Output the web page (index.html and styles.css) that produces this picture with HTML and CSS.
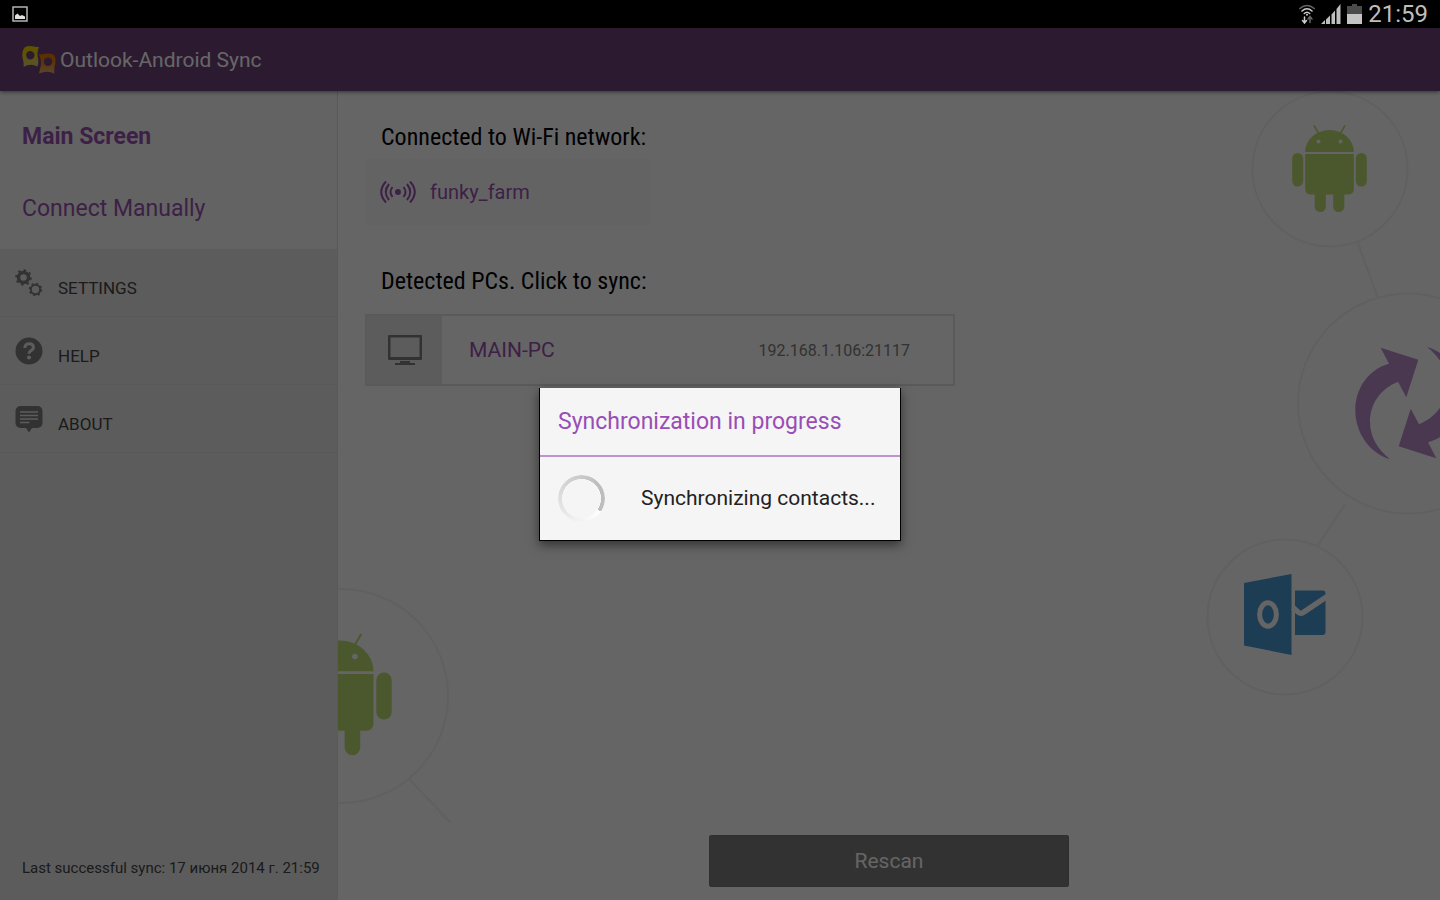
FILE: index.html
```html
<!DOCTYPE html>
<html lang="en">
<head>
  <meta charset="UTF-8">
  <meta name="viewport" content="width=device-width, initial-scale=1.0">
  <title>Outlook-Android Sync</title>
  <link rel="stylesheet" href="styles.css">
</head>
<body>
  <!-- shared robot shape -->
  <svg class="defs" width="0" height="0" aria-hidden="true">
    <symbol id="robot" viewBox="-38 -28 76 90" overflow="visible">
      <path d="M-24.3 0A24.3 22 0 0 1 24.3 0Z"/>
      <path d="M-15.2-26-10.5-18M15.2-26 10.5-18" stroke="#bcda70" stroke-width="1.5" stroke-linecap="round"/>
      <circle cx="-11" cy="-10.5" r="2" fill="#fcfcfc"/>
      <circle cx="11" cy="-10.5" r="2" fill="#fcfcfc"/>
      <path d="M-24.3 2H24.3V37.5A5 5 0 0 1 19.3 42.5H-19.3A5 5 0 0 1-24.3 37.5Z"/>
      <rect x="-37.3" y="1" width="11" height="33.5" rx="5.5"/>
      <rect x="26.3" y="1" width="11" height="33.5" rx="5.5"/>
      <path d="M-14.8 40H-3.7V54.5A5.5 5.5 0 0 1-14.8 54.5ZM3.7 40H14.8V54.5A5.5 5.5 0 0 1 3.7 54.5Z"/>
    </symbol>
  </svg>

  <div class="statusbar">
    <svg width="16" height="16" viewBox="0 0 16 16">
      <rect x="1" y="1" width="14" height="14" fill="none" stroke="#b4b4b4" stroke-width="1.5"/>
      <path d="M3 13V9.5L5.5 7.5 8 10 10 9 13 10.5V13Z" fill="#e0e0e0"/>
    </svg>
    <div class="status-right">
      <svg width="16" height="20" viewBox="0 0 16 20" fill="none" stroke-linecap="round">
        <path d="M.8 4.5Q8-1.5 15.2 4.5" stroke="#666" stroke-width="1.5"/>
        <path d="M3 7Q8 2.500 13 7M5.3 9.5Q8 7 10.7 9.5" stroke="#ccc" stroke-width="1.6"/>
        <circle cx="8" cy="10.8" r="1" fill="#ccc"/>
        <path d="M5.5 13V18M3.5 16.5 5.5 19 7.5 16.5" stroke="#ccc" stroke-width="1.5"/>
        <path d="M11 18.5V13.5M9 15 11 12.5 13 15" stroke="#666" stroke-width="1.5"/>
      </svg>
      <svg width="20" height="20" viewBox="0 0 20 20" fill="#bebebe">
        <path d="M0 20 4 16V20ZM5 20V15.5L9 11.5V20ZM10.5 20V10.5L14 6.500V20ZM15.5 20V5L19.5 0V20Z"/>
      </svg>
      <svg width="15" height="20" viewBox="0 0 15 20">
        <path d="M0 2H5V0H10V2H15V10H0Z" fill="#4b4b4b"/>
        <path d="M0 10H15V20H0Z" fill="#c4c4c4"/>
      </svg>
      <time class="clock">21:59</time>
    </div>
  </div>

  <div class="app">
    <header class="header">
      <svg class="logo" width="34" height="28" viewBox="0 0 34 28" aria-hidden="true">
        <defs>
          <linearGradient id="yel" x1="0" y1="0" x2="0" y2="1"><stop offset=".3" stop-color="#f0d000"/><stop offset="1" stop-color="#d8cb80"/></linearGradient>
          <linearGradient id="org" x1="0" y1="0" x2="0" y2="1"><stop offset=".3" stop-color="#e67a00"/><stop offset="1" stop-color="#e0ac78"/></linearGradient>
        </defs>
        <path fill="url(#yel)" fill-rule="evenodd" d="M2.5 1.5Q6-.5 10 .3Q14 1.3 17 1Q14.5 6 16 12Q17 17 15.500 20.500Q8 17 1.5 21Q2 18 1 14Q-1 6 2.5 1.5ZM8.3 5A4.2 4.2 0 1 0 8.3 13.4A4.2 4.2 0 1 0 8.3 5Z"/>
        <path fill="url(#org)" fill-rule="evenodd" d="M17 8.500Q21 8.500 25 7.500Q30 7 32.500 9.500Q34.500 14 32.500 21Q32 24 32.500 27.500Q25 24 17 27.500Q17.500 25 18.500 21Q20 14 17 8.500ZM26 11.5A4.2 4.2 0 1 0 26 19.9A4.2 4.2 0 1 0 26 11.5Z"/>
      </svg>
      <h1>Outlook-Android Sync</h1>
    </header>

    <div class="content">
      <nav class="sidebar">
        <div class="nav-main">
          <a class="active" href="#">Main Screen</a>
          <a href="#">Connect Manually</a>
        </div>
        <ul class="nav-menu">
          <li><a href="#">
            <svg width="28" height="28" viewBox="0 0 28 28" fill="none" stroke="#7d7d7d">
              <circle cx="8.5" cy="8.5" r="5" stroke-width="3.4"/>
              <circle cx="8.5" cy="8.5" r="7.3" stroke-width="2" stroke-dasharray="2.4 3.33"/>
              <circle cx="20.5" cy="20.5" r="4.7" stroke-width="2"/>
              <circle cx="20.5" cy="20.5" r="6" stroke-width="1.6" stroke-dasharray="2 2.71"/>
            </svg>
            <span>SETTINGS</span></a></li>
          <li><a href="#">
            <svg width="28" height="28" viewBox="0 0 28 28">
              <circle cx="14" cy="14" r="13.5" fill="#7d7d7d"/>
              <path d="M9.8 11Q10 6.7 14.2 6.7Q18.4 6.7 18.4 10.2Q18.4 12.3 16 13.6Q14 14.7 14 16.8" fill="none" stroke="#e6e6e6" stroke-width="3"/>
              <circle cx="14" cy="20.5" r="2.1" fill="#e6e6e6"/>
            </svg>
            <span>HELP</span></a></li>
          <li><a href="#">
            <svg width="28" height="28" viewBox="0 0 28 28">
              <path d="M5.5 1H22.5A5 5 0 0 1 27.5 6V18A5 5 0 0 1 22.5 23H17L14 27.5 11 23H5.5A5 5 0 0 1 .5 18V6A5 5 0 0 1 5.5 1Z" fill="#7d7d7d"/>
              <path d="M5 7H23M5 10.5H23M5 14H23M5 17.5H14.5" stroke="#e6e6e6" stroke-width="1.5"/>
            </svg>
            <span>ABOUT</span></a></li>
        </ul>
        <p class="last-sync">Last successful sync: 17 июня 2014 г. 21:59</p>
      </nav>

      <main class="main">
        <svg class="art art-right" width="240" height="620" viewBox="1200 91 240 620" aria-hidden="true">
          <g fill="none" stroke="#f0f0f0" stroke-width="2">
            <circle cx="1330" cy="169" r="77.5"/>
            <circle cx="1408" cy="403.5" r="110"/>
            <circle cx="1285" cy="617" r="77.5"/>
            <path d="M1357.5 242 1377.5 297M1345 504 1317.5 546"/>
          </g>
          <use href="#robot" x="1291.5" y="124" width="76" height="90" fill="#bcda70"/>
          <g fill="#b98bc9">
            <path id="arrow" d="M1380.7 347.7 1418.3 359.7 1406.3 397.3 1398 381.7C1380 389 1370 404 1370 422C1370 437 1378 450 1390 459C1371 454 1355.3 434 1355.3 410C1355.3 388 1369 369 1389 363.7Z"/>
            <use href="#arrow" transform="rotate(180 1408.5 403)"/>
          </g>
          <path d="M1244 583 1291.5 574V655L1244 645.5ZM1295 590.5H1322.5A3 3 0 0 1 1325.5 593.5V632A3 3 0 0 1 1322.5 635H1295Z" fill="#4898d2"/>
          <ellipse cx="1268" cy="614.5" rx="8.4" ry="11.7" fill="none" stroke="#fcfcfc" stroke-width="5"/>
          <path d="M1293 607.5 1298 612Q1301 614.5 1304 612L1327 596.5" fill="none" stroke="#fcfcfc" stroke-width="5.5"/>
        </svg>
        <svg class="art art-left" width="120" height="250" viewBox="338 580 120 250" aria-hidden="true">
          <g fill="none" stroke="#f0f0f0" stroke-width="2">
            <circle cx="341" cy="696" r="107"/>
            <path d="M409 779 451 823"/>
          </g>
          <use href="#robot" x="286" y="632" width="107" height="126" fill="#bcda70"/>
        </svg>

        <section class="block">
          <h2>Connected to Wi-Fi network:</h2>
          <div class="network">
            <svg width="36" height="24" viewBox="0 0 36 24" fill="none" stroke="#9a52b0" stroke-width="2">
              <circle cx="18" cy="12" r="3" fill="#9a52b0" stroke="none"/>
              <path d="M12.5 7Q8.5 12 12.5 17M9 4Q2.5 12 9 20M6 1.5Q-3.5 12 6 22.5M23.5 7Q27.5 12 23.5 17M27 4Q33.5 12 27 20M30 1.5Q39.5 12 30 22.5"/>
            </svg>
            <span>funky_farm</span>
          </div>
        </section>

        <section class="block">
          <h2>Detected PCs. Click to sync:</h2>
          <button class="pc" type="button">
            <span class="pc-icon">
              <svg width="34" height="32" viewBox="0 0 34 32" fill="#7d7d7d">
                <path fill-rule="evenodd" d="M1 1H33A1 1 0 0 1 34 2V25A1 1 0 0 1 33 26H1A1 1 0 0 1 0 25V2A1 1 0 0 1 1 1ZM2.5 3.5V23H31.5V3.5Z"/>
                <path d="M12 27H22V29H27V31H7V29H12Z"/>
              </svg>
            </span>
            <span class="pc-name">MAIN-PC</span>
            <span class="pc-ip">192.168.1.106:21117</span>
          </button>
        </section>

        <button class="rescan" type="button">Rescan</button>
      </main>
    </div>

    <div class="overlay">
      <div class="dialog" role="dialog" aria-labelledby="dialogTitle">
        <h2 id="dialogTitle">Synchronization in progress</h2>
        <div class="dialog-body">
          <div class="spinner"></div>
          <p>Synchronizing contacts...</p>
        </div>
      </div>
    </div>
  </div>
</body>
</html>
```
FILE: styles.css
```css
* {
  box-sizing: border-box;
}
body {
  margin: 0;
  height: 100vh;
  display: flex;
  flex-direction: column;
  font-family: Roboto, sans-serif;
  background: #000;
  color: #000;
}
h1, h2, p, ul {
  margin: 0;
  padding: 0;
  font-weight: normal;
}
a {
  color: inherit;
  text-decoration: none;
}
button {
  font-family: inherit;
  cursor: pointer;
}
.defs {
  position: absolute;
}

/* status bar */
.statusbar {
  height: 28px;
  flex-shrink: 0;
  display: flex;
  align-items: center;
  justify-content: space-between;
  padding: 0 12px;
}
.status-right {
  display: flex;
  align-items: center;
  gap: 6px;
}
.clock {
  color: #bebebe;
  font-size: 24px;
  line-height: 28px;
}

/* app */
.app {
  position: relative;
  flex: 1;
  min-height: 0;
  display: flex;
  flex-direction: column;
  background: #fcfcfc;
}
.header {
  height: 63px;
  flex-shrink: 0;
  display: flex;
  align-items: center;
  gap: 4px;
  padding: 0 22px;
  background: #6e417a;
  box-shadow: 0 1px 4px rgba(0, 0, 0, 0.5);
  z-index: 1;
}
.header h1 {
  font-size: 21px;
  line-height: 28px;
  color: #fff;
}
.content {
  flex: 1;
  min-height: 0;
  display: flex;
}

/* sidebar */
.sidebar {
  width: 338px;
  flex-shrink: 0;
  display: flex;
  flex-direction: column;
  background: #e6e6e6;
  border-right: 1px solid #dedede;
}
.nav-main {
  padding: 10px 0 4px;
  background: #f8f8f8;
}
.nav-main a {
  display: block;
  padding-left: 22px;
  font-size: 23px;
  line-height: 72px;
  color: #9a52b0;
}
.nav-main .active {
  font-weight: bold;
}
.nav-menu {
  list-style: none;
}
.nav-menu a {
  height: 68px;
  display: flex;
  align-items: center;
  gap: 15px;
  padding-left: 15px;
  border-bottom: 1px solid #dcdcdc;
  font-size: 17px;
  color: #444;
}
.nav-menu span {
  padding-top: 10px;
}
.last-sync {
  margin-top: auto;
  padding: 0 0 22px 22px;
  font-size: 15px;
  line-height: 20px;
  color: #444;
}

/* main */
.main {
  position: relative;
  flex: 1;
  display: flex;
  flex-direction: column;
  padding: 24px 27px 13px;
  overflow: hidden;
}
.art {
  position: absolute;
}
.art-right {
  top: 0;
  right: 0;
}
.art-left {
  left: 0;
  bottom: 70px;
}
.block {
  position: relative;
  margin-bottom: 34px;
}
.block h2 {
  padding-left: 16px;
  font-family: "Roboto Condensed", "Liberation Sans Narrow", Roboto, sans-serif;
  font-size: 24px;
  line-height: 44px;
}
.network {
  width: 285px;
  height: 66px;
  display: flex;
  align-items: center;
  gap: 14px;
  padding-left: 15px;
  background: #f8f8f8;
  color: #9a52b0;
  font-size: 20px;
}
.pc {
  width: 590px;
  max-width: 100%;
  height: 72px;
  margin-top: 11px;
  display: flex;
  align-items: center;
  padding: 0;
  border: 2px solid #e0e0e0;
  background: #fcfcfc;
  text-align: left;
}
.pc-icon {
  align-self: stretch;
  width: 75px;
  display: flex;
  align-items: center;
  justify-content: center;
  background: #e6e6e6;
}
.pc-name {
  flex: 1;
  padding-left: 27px;
  font-size: 21px;
  color: #9a52b0;
}
.pc-ip {
  padding-right: 43px;
  font-size: 16px;
  color: #7d7d7d;
}
.rescan {
  position: relative;
  width: 360px;
  height: 52px;
  margin: auto auto 0;
  border: 1px solid #777;
  border-radius: 2px;
  background: #7d7d7d;
  color: #fcfcfc;
  font-size: 21px;
}

/* progress dialog */
.overlay {
  position: absolute;
  inset: 0;
  display: flex;
  align-items: center;
  justify-content: center;
  background: rgba(0, 0, 0, 0.6);
  z-index: 2;
}
.dialog {
  width: 362px;
  border: 1px solid #000;
  border-top: none;
  background: #f5f5f5;
  box-shadow: 0 4px 10px rgba(0, 0, 0, 0.5);
}
.dialog h2 {
  padding: 0 18px;
  border-bottom: 2px solid #bf93d3;
  font-size: 23px;
  line-height: 67px;
  color: #9a4db5;
}
.dialog-body {
  display: flex;
  align-items: center;
  gap: 36px;
  padding: 18px;
}
.dialog-body p {
  font-size: 21px;
  color: #222;
}
.spinner {
  width: 47px;
  height: 47px;
  border-radius: 50%;
  background: conic-gradient(from 124deg, #fff, #f0f0f0 20%, #bdbdbd 80%, #bdbdbd);
  -webkit-mask: radial-gradient(closest-side, transparent 82%, #000 84%);
  mask: radial-gradient(closest-side, transparent 82%, #000 84%);
}
```
